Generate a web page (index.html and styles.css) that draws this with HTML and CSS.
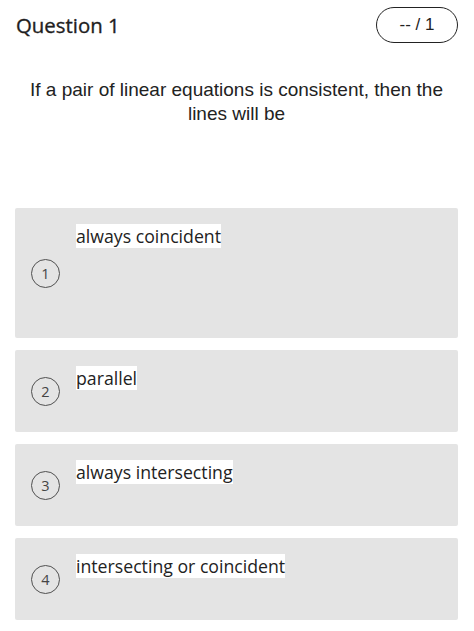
FILE: index.html
```html
<!DOCTYPE html>
<html>
<head>
<meta charset="utf-8">
<link rel="stylesheet" href="styles.css">
</head>
<body>
<div class="page">
  <header class="head">
    <h1 class="title">Question 1</h1>
    <div class="score">-- / 1</div>
  </header>
  <p class="prompt">If a pair of linear equations is consistent, then the lines will be</p>
  <div class="options">
    <div class="option option-tall">
      <span class="num">1</span>
      <div class="label"><span class="hl">always coincident</span></div>
    </div>
    <div class="option">
      <span class="num">2</span>
      <div class="label"><span class="hl">parallel</span></div>
    </div>
    <div class="option">
      <span class="num">3</span>
      <div class="label"><span class="hl">always intersecting</span></div>
    </div>
    <div class="option">
      <span class="num">4</span>
      <div class="label"><span class="hl">intersecting or coincident</span></div>
    </div>
  </div>
</div>
</body>
</html>
```
FILE: styles.css
```css
html, body {
  margin: 0;
  padding: 0;
  background: #ffffff;
}
.page {
  padding: 7px 16px 0 15px;
  color: #222;
}
.head {
  display: flex;
  justify-content: space-between;
  align-items: center;
  height: 36px;
}
.title {
  margin: 0;
  padding-left: 1px;
  font-family: "Open Sans", sans-serif;
  font-weight: 400;
  font-size: 20.4px;
  -webkit-text-stroke: 0.35px #1e1e1e;
  color: #1e1e1e;
}
.score {
  box-sizing: border-box;
  width: 82px;
  height: 36px;
  border: 1.5px solid #222;
  border-radius: 18px;
  display: flex;
  align-items: center;
  justify-content: center;
  font-family: "Liberation Sans", Arial, sans-serif;
  font-size: 17px;
  color: #222;
}
.prompt {
  margin: 35px 0 0 0;
  padding: 0 10px;
  text-align: center;
  font-family: "Liberation Sans", Arial, sans-serif;
  font-size: 19px;
  line-height: 24px;
  color: #222;
}
.options {
  margin-top: 82px;
  display: flex;
  flex-direction: column;
  gap: 12px;
}
.option {
  box-sizing: border-box;
  height: 82px;
  background: #e4e4e4;
  border-radius: 2px;
  display: flex;
  align-items: center;
  padding-left: 16px;
}
.option-tall {
  height: 130px;
}
.num {
  box-sizing: border-box;
  flex: none;
  width: 29px;
  height: 29px;
  border: 1.5px solid #505050;
  border-radius: 50%;
  display: flex;
  align-items: center;
  justify-content: center;
  font-family: "Open Sans", sans-serif;
  font-size: 14.5px;
  color: #444;
}
.label {
  align-self: flex-start;
  margin-left: 16px;
  padding-top: 17px;
}
.hl {
  background: #ffffff;
  font-family: "Open Sans", sans-serif;
  font-size: 17.7px;
  line-height: 23px;
  color: #222;
}
```
